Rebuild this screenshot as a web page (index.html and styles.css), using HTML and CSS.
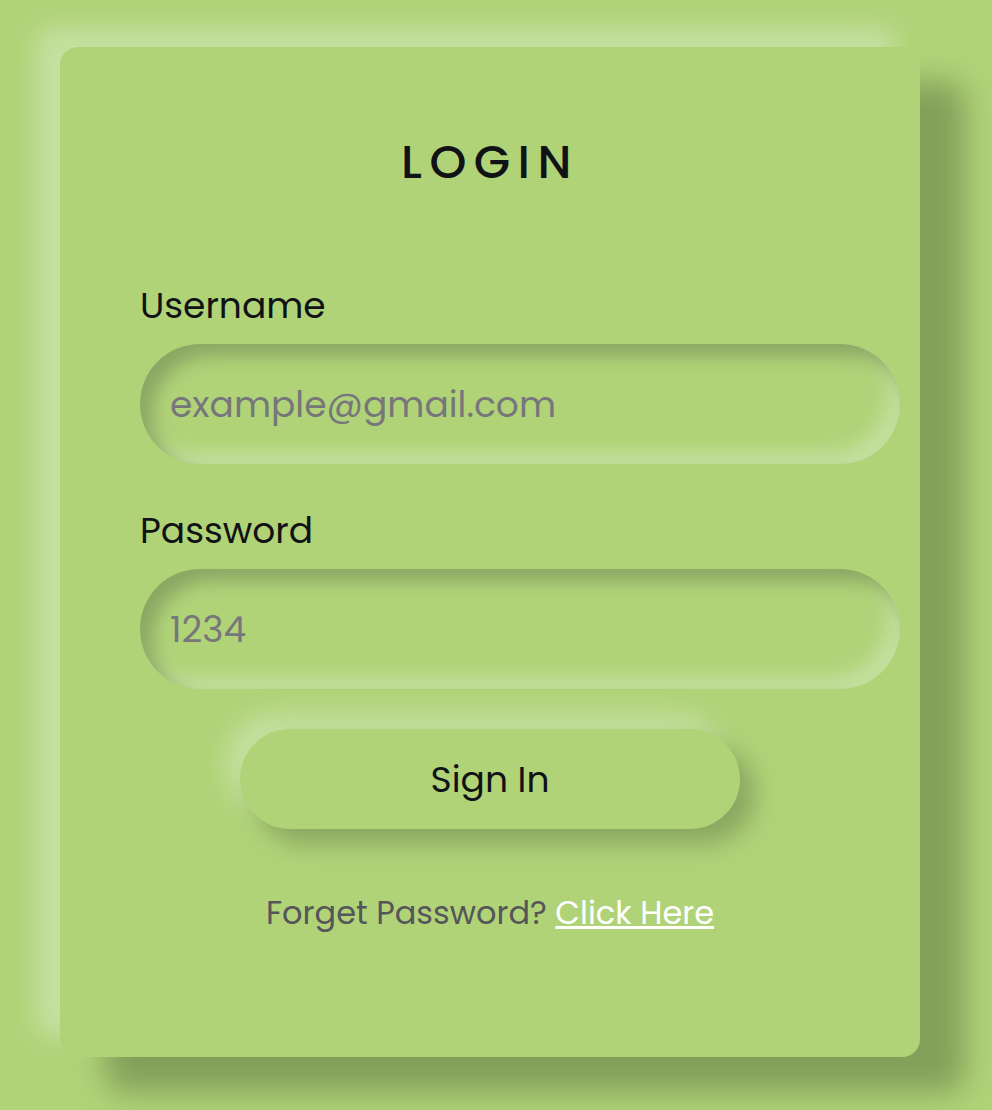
FILE: index.html
```html
<!DOCTYPE html>
<html lang="en">
<head>
<meta charset="utf-8">
<title>Login</title>
<link rel="stylesheet" href="styles.css">
</head>
<body>
<div class="page">
  <form class="card">
    <h1 class="title">LOGIN</h1>
    <label class="label" for="user">Username</label>
    <input class="field" id="user" type="text" placeholder="example@gmail.com">
    <label class="label label-pass" for="pass">Password</label>
    <input class="field" id="pass" type="password" placeholder="1234">
    <div class="actions">
      <button class="btn" type="button">Sign In</button>
    </div>
    <p class="forgot">Forget Password? <a href="#" class="link">Click Here</a></p>
  </form>
</div>
</body>
</html>
```

FILE: styles.css
```css
html, body {
  margin: 0;
  padding: 0;
  background: #b0d378;
}

body {
  font-family: "Poppins", "Inter", "Liberation Sans", sans-serif;
  color: #111216;
}

.page {
  padding: 47px 0 0 60px;
  height: 1110px;
  box-sizing: border-box;
  overflow: hidden;
}

.card {
  width: 860px;
  height: 1010px;
  box-sizing: border-box;
  padding: 85px 80px 0;
  background: #b0d378;
  border-radius: 18px;
  box-shadow: 45px 35px 30px #84a05a, -25px -20px 25px #c6e0a0;
  display: flex;
  flex-direction: column;
}

.title {
  margin: 0 0 94px;
  height: 60px;
  line-height: 60px;
  font-size: 47px;
  font-weight: 500;
  letter-spacing: 7.5px;
  text-align: center;
}

.label {
  display: block;
  height: 40px;
  line-height: 40px;
  font-size: 36px;
  font-weight: 400;
  margin-bottom: 18px;
}

.label-pass {
  margin-top: 47px;
}

.field {
  display: block;
  width: 700px;
  height: 120px;
  box-sizing: content-box;
  padding: 0 30px;
  border: none;
  outline: none;
  border-radius: 60px;
  background: #b0d378;
  font-family: inherit;
  font-size: 36px;
  color: #222;
  box-shadow: inset 12px 12px 18px #8ba763, inset -12px -12px 18px #c5e09f;
}

.field::placeholder {
  color: #77767b;
}

.actions {
  display: flex;
  justify-content: center;
  margin-top: 40px;
}

.btn {
  width: 500px;
  height: 100px;
  border: none;
  border-radius: 50px;
  background: #b0d378;
  font-family: inherit;
  font-size: 36px;
  color: #111216;
  box-shadow: 15px 15px 25px #8aa760, -15px -15px 25px #c6e0a0;
  cursor: pointer;
}

.forgot {
  margin: 64px 0 0;
  text-align: center;
  font-size: 32px;
  line-height: 40px;
  color: #55555a;
}

.link {
  color: #ffffff;
  text-decoration: underline;
}
```
